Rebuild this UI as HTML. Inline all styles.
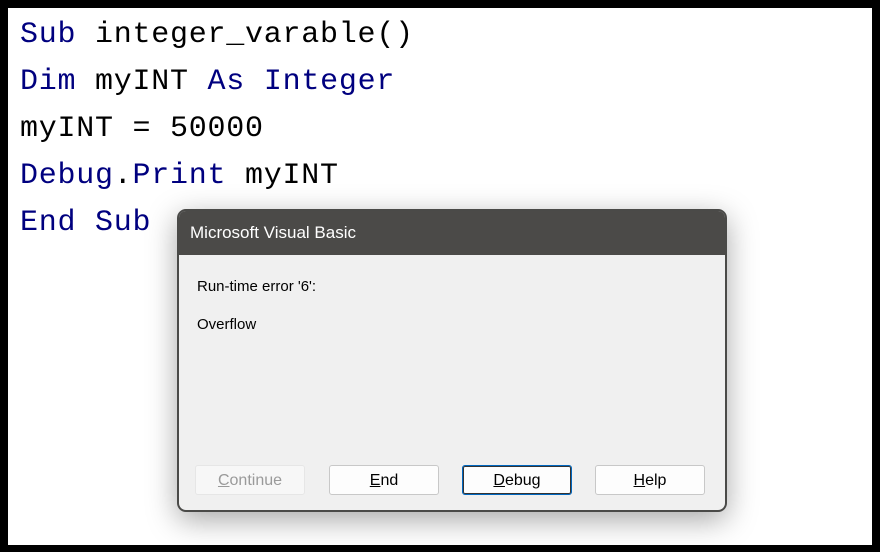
<!DOCTYPE html>
<html><head><style>
html,body{margin:0;padding:0}
body{width:880px;height:552px;background:#000;position:relative;overflow:hidden;font-family:"Liberation Sans",sans-serif}
.page{position:absolute;left:8px;top:8px;width:864px;height:537px;background:#fff}
.code{position:absolute;left:20px;font-family:"Liberation Mono",monospace;font-size:30px;letter-spacing:0.75px;color:#000;white-space:pre;line-height:30px}
.k{color:#00007f}
.dlg{position:absolute;left:177px;top:209px;width:546px;height:299px;border:2px solid #4a4a48;border-radius:9px;background:#f0f0f0;overflow:hidden;box-shadow:0 8px 30px rgba(0,0,0,.35)}
.title{height:44px;background:#4b4a48;color:#fff;font-size:17px;line-height:44px;padding-left:11px}
.t{position:absolute;left:18px;font-size:15px;color:#000}
.btn{position:absolute;top:254px;width:108px;height:28px;border:1px solid #c8c8c8;border-radius:3px;background:#fdfdfd;text-align:center;line-height:30px;font-size:16px;color:#000}
</style></head><body>
<div class="page"></div>
<div class="code" style="top:20px"><span class="k">Sub</span> integer_varable()</div>
<div class="code" style="top:67px"><span class="k">Dim</span> myINT <span class="k">As</span> <span class="k">Integer</span></div>
<div class="code" style="top:114px">myINT = 50000</div>
<div class="code" style="top:161px"><span class="k">Debug</span>.<span class="k">Print</span> myINT</div>
<div class="code" style="top:208px"><span class="k">End</span> <span class="k">Sub</span></div>
<div class="dlg">
<div class="title">Microsoft Visual Basic</div>
<div class="t" style="top:67px">Run-time error '6':</div>
<div class="t" style="top:105px">Overflow</div>
<div class="btn" style="left:16px;width:108px;border-color:#e6e6e6;background:#f7f7f7;color:#9a9a9a"><u>C</u>ontinue</div>
<div class="btn" style="left:150px"><u>E</u>nd</div>
<div class="btn" style="left:283px;border:1px solid #0067c0;box-shadow:inset 0 0 0 1px #333"><u>D</u>ebug</div>
<div class="btn" style="left:416px"><u>H</u>elp</div>
</div>
</body></html>
